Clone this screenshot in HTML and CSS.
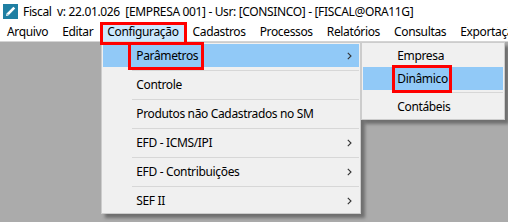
FILE: index.html
```html
<!DOCTYPE html>
<html lang="pt-BR">
<head>
<meta charset="utf-8">
<title>Fiscal</title>
<link rel="stylesheet" href="styles.css">
</head>
<body>
<div class="window">
  <header class="titlebar">
    <svg class="app-icon" width="15" height="15" viewBox="0 0 15 15" aria-hidden="true">
      <rect width="15" height="15" fill="#1f7fa3"/>
      <path d="M3 12 L3.6 9.6 L10.4 2.8 L12.2 4.6 L5.4 11.4 Z" fill="#ffffff"/>
      <path d="M4.2 9.8 L5.2 10.8" stroke="#1f7fa3" stroke-width="0.8"/>
    </svg>
    <span class="title">Fiscal&nbsp; v: 22.01.026&nbsp; [EMPRESA 001] - Usr: [CONSINCO] - [FISCAL@ORA11G]</span>
  </header>
  <nav class="menubar">
    <span class="mi">Arquivo</span>
    <span class="mi">Editar</span>
    <span class="mi open">Configuração
      <span class="mark mark-config"></span>
      <div class="menu main-menu">
        <div class="item hl"><span class="label mark-param">Parâmetros</span><svg class="chev" width="5" height="8" viewBox="0 0 5 8"><path d="M0.8 0.8 L4 4 L0.8 7.2" fill="none" stroke="#333" stroke-width="1.1"/></svg>
          <div class="menu sub-menu">
            <div class="item"><span class="label">Empresa</span></div>
            <div class="item hl"><span class="label mark-din">Dinâmico</span></div>
            <div class="sep"></div>
            <div class="item"><span class="label">Contábeis</span></div>
          </div>
        </div>
        <div class="sep"></div>
        <div class="item"><span class="label">Controle</span></div>
        <div class="sep"></div>
        <div class="item"><span class="label">Produtos não Cadastrados no SM</span></div>
        <div class="sep"></div>
        <div class="item"><span class="label">EFD - ICMS/IPI</span><svg class="chev" width="5" height="8" viewBox="0 0 5 8"><path d="M0.8 0.8 L4 4 L0.8 7.2" fill="none" stroke="#333" stroke-width="1.1"/></svg></div>
        <div class="sep"></div>
        <div class="item"><span class="label">EFD - Contribuições</span><svg class="chev" width="5" height="8" viewBox="0 0 5 8"><path d="M0.8 0.8 L4 4 L0.8 7.2" fill="none" stroke="#333" stroke-width="1.1"/></svg></div>
        <div class="sep"></div>
        <div class="item"><span class="label">SEF II</span><svg class="chev" width="5" height="8" viewBox="0 0 5 8"><path d="M0.8 0.8 L4 4 L0.8 7.2" fill="none" stroke="#333" stroke-width="1.1"/></svg></div>
      </div>
    </span>
    <span class="mi">Cadastros</span>
    <span class="mi">Processos</span>
    <span class="mi">Relatórios</span>
    <span class="mi">Consultas</span>
    <span class="mi">Exportação</span>
  </nav>
  <main class="workspace"></main>
</div>
</body>
</html>
```

FILE: styles.css
```css
* { box-sizing: border-box; }
html, body { margin: 0; padding: 0; }
body {
  width: 508px;
  height: 222px;
  overflow: hidden;
  background: #ababab;
  font-family: "Noto Sans", "Open Sans", sans-serif;
  font-size: 12px;
  letter-spacing: -0.35px;
  color: #000;
}
.window {
  display: flex;
  flex-direction: column;
  height: 222px;
  overflow: hidden;
}
.titlebar {
  height: 22px;
  background: #fff;
  display: flex;
  align-items: center;
  padding-left: 3px;
  gap: 5px;
  white-space: nowrap;
}
.app-icon { flex: none; margin-top: 1px; }
.menubar {
  height: 19px;
  background: #fff;
  display: flex;
  align-items: stretch;
  white-space: nowrap;
}
.mi {
  position: relative;
  padding: 0 7px;
  display: flex;
  align-items: center;
}
.mi.open { background: #cce8ff; }
.workspace {
  flex: 1;
  background: #ababab;
  border-top: 1px solid #d4d4d4;
}
.mark { position: absolute; border: 3px solid #ff0000; z-index: 5; pointer-events: none; }
.mark-config { left: 0; right: -1px; top: 0; height: 23px; }
.menu {
  position: absolute;
  background: #f0f0f0;
  border: 1px solid #cccccc;
  padding: 1px 1px;
  box-shadow: 4px 4px 3px rgba(0, 0, 0, 0.35);
  z-index: 3;
}
.main-menu {
  left: 1px;
  top: 20px;
  width: 260px;
}
.item {
  position: relative;
  height: 23px;
  display: flex;
  align-items: center;
  padding-left: 33px;
  padding-right: 7px;
}
.item.hl { background: #91c9f7; }
.label { position: relative; flex: 1; }
.chev { flex: none; }
.sep {
  height: 1px;
  background: #d7d7d7;
  margin: 3px 0 2px 29px;
}
.sub-menu {
  left: 258px;
  top: -2px;
  width: 144px;
  z-index: 4;
}
.sub-menu .item { padding-left: 34px; }
.sub-menu .sep { margin: 2px 0 2px 29px; }
.sub-menu .label { flex: none; }
.mark-param::after,
.mark-din::after {
  content: "";
  position: absolute;
  border: 3px solid #ff0000;
}
.mark-param { flex: none; margin-right: auto; }
.mark-param::after { left: -8px; right: -6px; top: -5px; bottom: -6px; }
.mark-din::after { left: -5px; right: -4px; top: -5px; bottom: -6px; }
```
